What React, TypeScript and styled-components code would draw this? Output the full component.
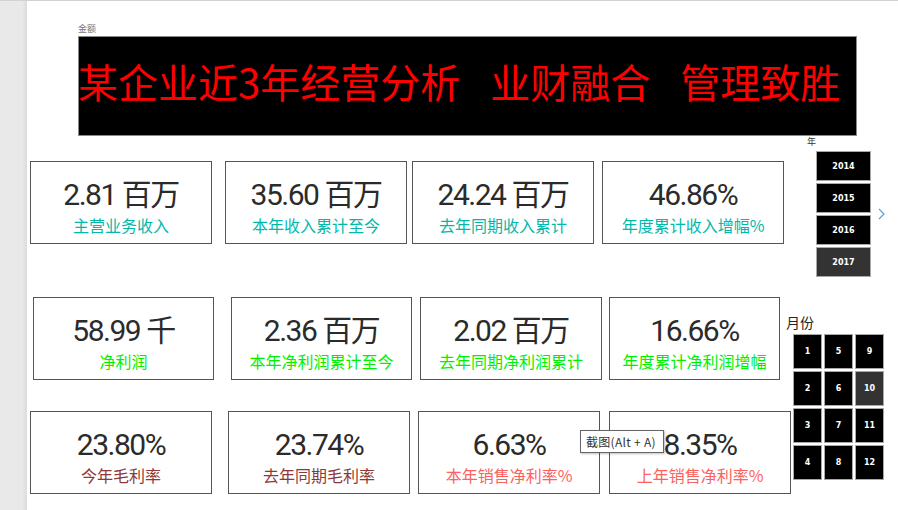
import React from "react";
import styled, { createGlobalStyle } from "styled-components";

const GlobalStyle = createGlobalStyle`
  html, body {
    margin: 0;
    padding: 0;
    background: #fff;
  }
  body {
    font-family: "Noto Sans", "Noto Sans CJK SC", sans-serif;
  }
`;

const Page = styled.div`
  display: flex;
  width: 898px;
  height: 510px;
  box-sizing: border-box;
  border-top: 1px solid #d2d2d2;
  overflow: hidden;
`;

const SideStrip = styled.div`
  width: 27px;
  flex-shrink: 0;
  background: linear-gradient(to right, #e9e9e9 0, #e9e9e9 22px, #dcdcdc 27px);
`;

const Canvas = styled.div`
  position: relative;
  flex: 1;
  display: flex;
  flex-direction: column;
  padding-top: 20px;
`;

const TitleLabel = styled.div`
  margin-left: 51px;
  height: 15px;
  font-family: "Noto Sans CJK SC", sans-serif;
  font-size: 9px;
  line-height: 15px;
  color: #777;
`;

const Header = styled.div`
  margin-left: 51px;
  width: 779px;
  height: 100px;
  box-sizing: border-box;
  background: #000;
  border: 1px solid #8a8a8a;
  display: flex;
  align-items: center;
  gap: 30px;
  padding-bottom: 10px;
  font-family: "Noto Sans CJK SC", sans-serif;
  font-size: 40px;
  line-height: 40px;
  color: #ff0000;
  white-space: nowrap;
`;

const HeaderPart = styled.span`
  &:first-child {
    margin-left: -1px;
  }
`;

const Body = styled.div`
  display: flex;
  flex: 1;
`;

const CardsColumn = styled.div`
  width: 759px;
  flex-shrink: 0;
  padding-top: 25px;
  display: flex;
  flex-direction: column;
`;

const Row = styled.div<{ $top: number }>`
  display: flex;
  margin-top: ${(p) => p.$top}px;
`;

const Card = styled.div<{ $w: number; $left: number }>`
  width: ${(p) => p.$w}px;
  height: 83px;
  margin-left: ${(p) => p.$left}px;
  flex-shrink: 0;
  box-sizing: border-box;
  border: 1px solid #555;
  display: flex;
  flex-direction: column;
  align-items: center;
  padding-top: 16px;
`;

const Value = styled.div`
  font-family: Roboto, "Noto Sans CJK SC", sans-serif;
  font-size: 30px;
  line-height: 34px;
  letter-spacing: -1.5px;
  color: #2b2b2b;
  white-space: nowrap;
`;

const Label = styled.div<{ $color: string }>`
  margin-top: 3px;
  font-family: "Noto Sans CJK SC", sans-serif;
  font-size: 16px;
  line-height: 20px;
  color: ${(p) => p.$color};
  white-space: nowrap;
`;

const SidePanel = styled.div`
  display: flex;
  flex-direction: column;
`;

const YearLabel = styled.div`
  margin-left: 21px;
  height: 12px;
  font-family: "Noto Sans CJK SC", sans-serif;
  font-size: 9px;
  line-height: 12px;
  color: #333;
`;

const YearRow = styled.div`
  display: flex;
  align-items: center;
  gap: 7px;
  margin-left: 30px;
  margin-top: 3px;
`;

const YearList = styled.div`
  display: flex;
  flex-direction: column;
  gap: 2px;
`;

const SlicerButton = styled.div<{ $active?: boolean; $w: number; $h: number }>`
  width: ${(p) => p.$w}px;
  height: ${(p) => p.$h}px;
  box-sizing: border-box;
  border: 1px solid #a8a8a8;
  background: ${(p) => (p.$active ? "#333333" : "#000")};
  color: #fff;
  display: flex;
  align-items: center;
  justify-content: center;
  font-family: "DejaVu Sans", sans-serif;
  font-size: 8px;
  font-weight: bold;
`;

const MonthLabel = styled.div`
  margin-top: 36px;
  height: 18px;
  font-family: "Noto Sans CJK SC", sans-serif;
  font-size: 14px;
  line-height: 18px;
  color: #252423;
`;

const MonthGrid = styled.div`
  margin-left: 7px;
  margin-top: 3px;
  display: grid;
  grid-template-columns: repeat(3, 29px);
  grid-template-rows: repeat(4, 35px);
  grid-auto-flow: column;
  gap: 2px;
`;

const Tooltip = styled.div`
  position: absolute;
  left: 553px;
  top: 429px;
  width: 84px;
  height: 23px;
  box-sizing: border-box;
  border: 1px solid #666;
  background: #fff;
  box-shadow: 1px 1px 2px rgba(0, 0, 0, 0.25);
  display: flex;
  align-items: center;
  padding-left: 5px;
  font-family: "Noto Sans CJK SC", sans-serif;
  font-size: 12px;
  letter-spacing: 0.3px;
  color: #333;
  white-space: nowrap;
`;

type CardData = { value: string; label: string; color: string; w: number; left: number };

const TEAL = "#01b8aa";
const GREEN = "#00f000";
const BROWN = "#8e3838";
const SALMON = "#fd625e";

const rows: { top: number; cards: CardData[] }[] = [
  {
    top: 0,
    cards: [
      { value: "2.81 百万", label: "主营业务收入", color: TEAL, w: 182, left: 3 },
      { value: "35.60 百万", label: "本年收入累计至今", color: TEAL, w: 182, left: 13 },
      { value: "24.24 百万", label: "去年同期收入累计", color: TEAL, w: 182, left: 5 },
      { value: "46.86%", label: "年度累计收入增幅%", color: TEAL, w: 182, left: 8 },
    ],
  },
  {
    top: 53,
    cards: [
      { value: "58.99 千", label: "净利润", color: GREEN, w: 181, left: 6 },
      { value: "2.36 百万", label: "本年净利润累计至今", color: GREEN, w: 181, left: 17 },
      { value: "2.02 百万", label: "去年同期净利润累计", color: GREEN, w: 182, left: 8 },
      { value: "16.66%", label: "年度累计净利润增幅", color: GREEN, w: 171, left: 7 },
    ],
  },
  {
    top: 31,
    cards: [
      { value: "23.80%", label: "今年毛利率", color: BROWN, w: 182, left: 3 },
      { value: "23.74%", label: "去年同期毛利率", color: BROWN, w: 182, left: 16 },
      { value: "6.63%", label: "本年销售净利率%", color: SALMON, w: 182, left: 8 },
      { value: "8.35%", label: "上年销售净利率%", color: SALMON, w: 182, left: 9 },
    ],
  },
];

const years = ["2014", "2015", "2016", "2017"];
const months = ["1", "2", "3", "4", "5", "6", "7", "8", "9", "10", "11", "12"];

function Chevron() {
  return (
    <svg width="7" height="12" viewBox="0 0 7 12">
      <polyline points="1,1 6,6 1,11" fill="none" stroke="#5a9fd6" strokeWidth="1.2" />
    </svg>
  );
}

export default function App() {
  return (
    <>
      <GlobalStyle />
      <Page>
        <SideStrip />
        <Canvas>
          <TitleLabel>金额</TitleLabel>
          <Header>
            <HeaderPart>某企业近3年经营分析</HeaderPart>
            <HeaderPart>业财融合</HeaderPart>
            <HeaderPart>管理致胜</HeaderPart>
          </Header>
          <Body>
            <CardsColumn>
              {rows.map((row, i) => (
                <Row key={i} $top={row.top}>
                  {row.cards.map((c) => (
                    <Card key={c.label} $w={c.w} $left={c.left}>
                      <Value>{c.value}</Value>
                      <Label $color={c.color}>{c.label}</Label>
                    </Card>
                  ))}
                </Row>
              ))}
            </CardsColumn>
            <SidePanel>
              <YearLabel>年</YearLabel>
              <YearRow>
                <YearList>
                  {years.map((y) => (
                    <SlicerButton key={y} $w={55} $h={30} $active={y === "2017"}>
                      {y}
                    </SlicerButton>
                  ))}
                </YearList>
                <Chevron />
              </YearRow>
              <MonthLabel>月份</MonthLabel>
              <MonthGrid>
                {months.map((m) => (
                  <SlicerButton key={m} $w={29} $h={35} $active={m === "10"}>
                    {m}
                  </SlicerButton>
                ))}
              </MonthGrid>
            </SidePanel>
          </Body>
          <Tooltip>截图(Alt + A)</Tooltip>
        </Canvas>
      </Page>
    </>
  );
}
